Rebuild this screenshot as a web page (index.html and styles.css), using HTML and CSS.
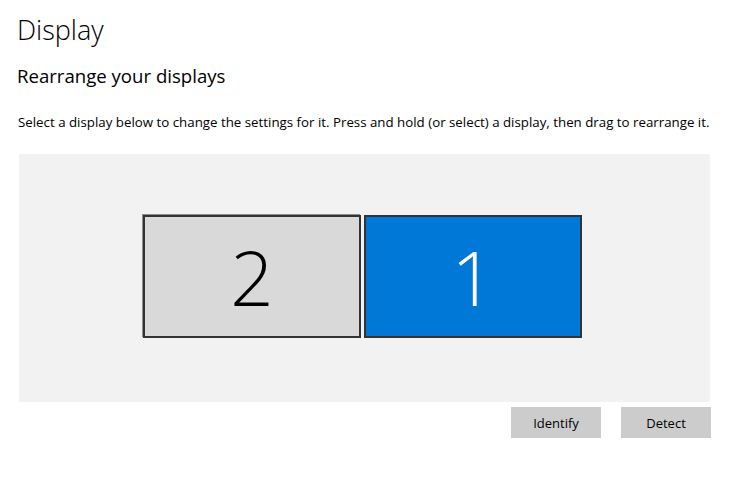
FILE: index.html
```html
<!DOCTYPE html>
<html>
<head>
<meta charset="utf-8">
<link rel="stylesheet" href="styles.css">
</head>
<body>
<div class="page">
  <h1 class="title">Display</h1>
  <h2 class="subtitle">Rearrange your displays</h2>
  <p class="desc">Select a display below to change the settings for it. Press and hold (or select) a display, then drag to rearrange it.</p>
  <div class="canvas">
    <div class="monitors">
      <div class="monitor secondary"><span class="num">2</span></div>
      <div class="monitor primary"><span class="num">1</span></div>
    </div>
  </div>
  <div class="actions">
    <button class="btn">Identify</button>
    <button class="btn">Detect</button>
  </div>
</div>
</body>
</html>
```

FILE: styles.css
```css
html, body {
  margin: 0;
  padding: 0;
  background: #ffffff;
}
body {
  font-family: "Segoe UI", "Open Sans", "Noto Sans", sans-serif;
  color: #000;
}
.page {
  padding: 12px 26px 0 19px;
  width: 692px;
}
.title {
  margin: 0 0 0 -2px;
  font-size: 27px;
  font-weight: 300;
  line-height: 36px;
}
.subtitle {
  margin: 15px 0 0 -2px;
  font-size: 18.6px;
  font-weight: 400;
  line-height: 26px;
}
.desc {
  margin: 24px 0 0 -1px;
  font-size: 13.3px;
  line-height: 18px;
  white-space: nowrap;
}
.canvas {
  margin-top: 23px;
  height: 248px;
  width: 691px;
  background: #f2f2f2;
  display: flex;
  justify-content: center;
  align-items: center;
}
.monitors {
  display: flex;
  gap: 3px;
  margin-left: -4px;
  margin-top: -3px;
}
.monitor {
  width: 214px;
  height: 119px;
  border: 2px solid #333333;
  display: flex;
  align-items: center;
  justify-content: center;
}
.secondary {
  background: #d9d9d9;
  box-shadow: -1px -1px 0 0 #8c8c8c;
}
.primary {
  background: #0078d7;
  color: #ffffff;
}
.num {
  font-size: 76px;
  font-weight: 300;
  line-height: 1;
}
.actions {
  display: flex;
  justify-content: flex-end;
  gap: 20px;
  margin-top: 5px;
  width: 692px;
}
.btn {
  width: 90px;
  height: 31px;
  border: none;
  background: #cccccc;
  font-family: "Segoe UI", "Open Sans", "Noto Sans", sans-serif;
  font-size: 13px;
  color: #000;
  padding: 0;
}
```
